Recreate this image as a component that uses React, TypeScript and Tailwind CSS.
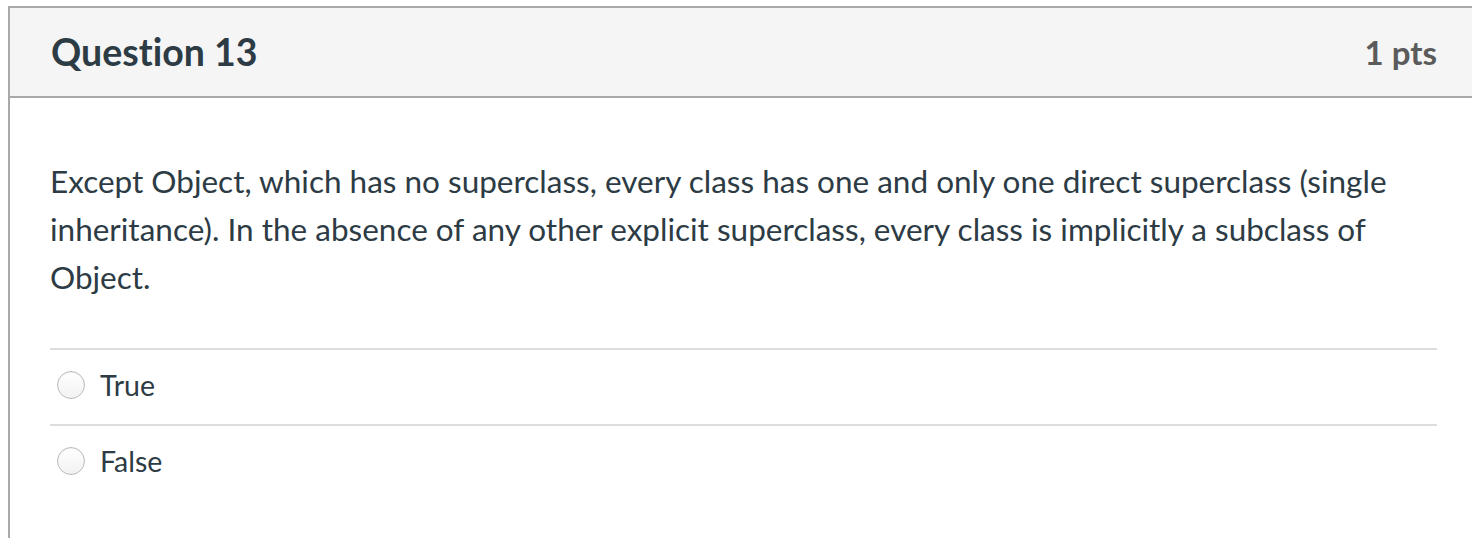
const answers = ["True", "False"];

const Radio = () => (
    <span className="block size-[28px] shrink-0 rounded-full border border-[#bbbbbb] bg-gradient-to-b from-white to-[#f2f2f2] shadow-[inset_0_1px_1px_rgba(0,0,0,0.06)]" />
);

const App = () => {
    return (
        <div className="h-[538px] w-[1472px] overflow-hidden bg-white pl-2 pt-[6px] font-['Lato','Liberation_Sans',sans-serif] text-[#2d3b45] [font-variant-ligatures:none]">
            <div className="h-[600px] border-l-2 border-t-2 border-[#a9a9a9]">
                {/* header */}
                <div className="flex h-[90px] items-center justify-between border-b-2 border-[#a9a9a9] bg-[#f5f5f5] pl-[41px] pr-[35px]">
                    <h2 className="text-[37.5px] font-bold leading-none">Question 13</h2>
                    <span className="text-[33px] font-bold leading-none text-[#5b5b5b]">1 pts</span>
                </div>
                {/* question body */}
                <div className="pl-[40px] pr-[35px] pt-[59px]">
                    <p className="text-[31.5px] leading-[48px]">
                        Except Object, which has no superclass, every class has one and only one direct superclass (single inheritance). In the absence of any other explicit superclass, every class is implicitly a subclass of Object.
                    </p>
                    <div className="mt-[47px]">
                        {answers.map((answer, idx) => (
                            <label key={idx} className="flex h-[76px] items-center gap-[15px] border-t-2 border-[#dddddd] pb-[4px] pl-[7px]">
                                <Radio />
                                <span className="text-[28.5px]">{answer}</span>
                            </label>
                        ))}
                    </div>
                </div>
            </div>
        </div>
    );
};

export default App;
